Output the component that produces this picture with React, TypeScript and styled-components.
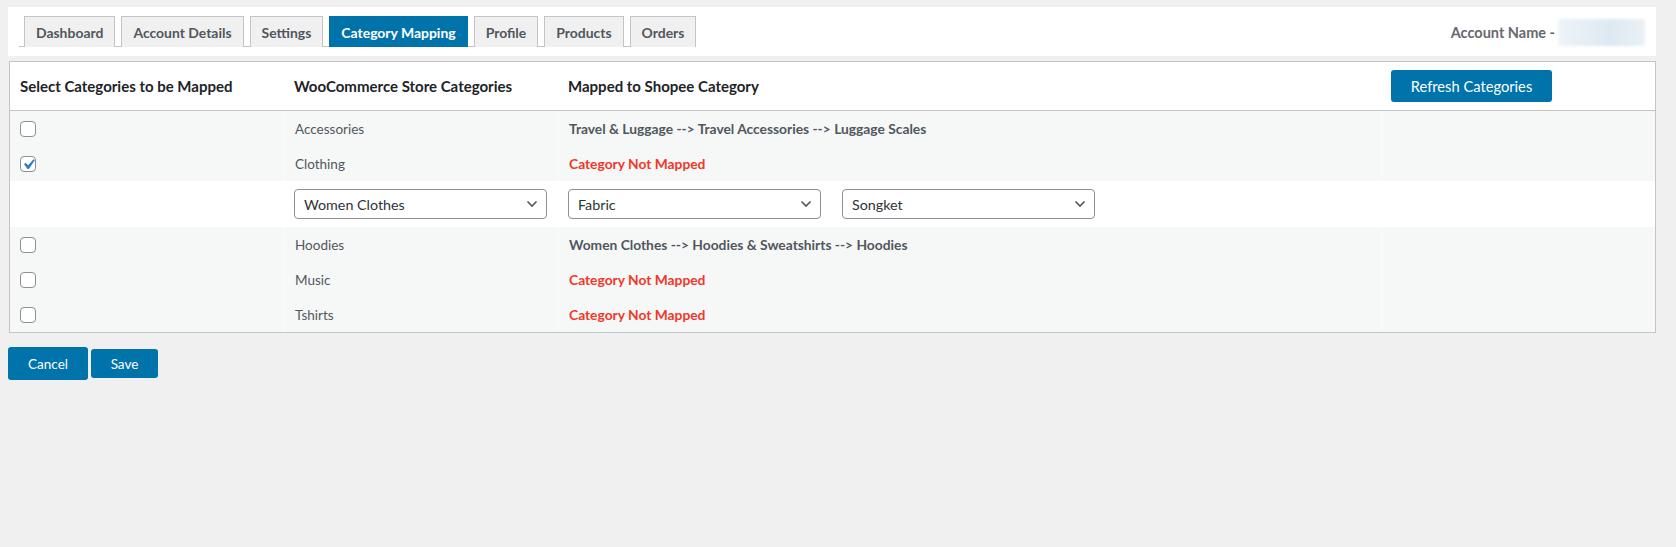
import React from "react";
import styled, { createGlobalStyle } from "styled-components";

const Global = createGlobalStyle`
  html, body { margin: 0; padding: 0; background: #f0f0f1; }
  body { font-family: "Lato", "Noto Sans", sans-serif; color: #3c434a; }
  * { box-sizing: border-box; }
`;

const Page = styled.div`
  min-height: 527px;
  padding: 7px 20px 0 8px;
  border-left: 1px solid #f5f5f5;
  margin-left: -1px;
`;

const TopBar = styled.div`
  background: #fff;
  height: 49px;
  display: flex;
  align-items: flex-start;
  justify-content: space-between;
  padding: 9px 11px 0 11px;
`;

const TabWrap = styled.nav`
  display: flex;
  border-bottom: 1px solid #c3c4c7;
  height: 31px;
`;

const Tab = styled.a<{ $active?: boolean }>`
  display: flex;
  align-items: center;
  height: 31px;
  margin-left: 6px;
  padding: 0 11px;
  font-size: 13.95px;
  font-weight: 700;
  text-decoration: none;
  border: 1px solid ${(p) => (p.$active ? "#0073aa" : "#c3c4c7")};
  border-bottom: none;
  background: ${(p) => (p.$active ? "#0073aa" : "#f0f0f1")};
  color: ${(p) => (p.$active ? "#fff" : "#50575e")};
  &:first-child { margin-left: 5px; }
`;

const AccountBox = styled.div`
  display: flex;
  align-items: center;
  gap: 3px;
  margin-top: 3px;
  font-size: 14.5px;
  font-weight: 700;
  color: #646970;
`;

const Blurred = styled.span`
  display: block;
  width: 87px;
  height: 27px;
  background: linear-gradient(90deg, #eef4f8, #dde9f1 60%, #eaf1f6);
  filter: blur(1.5px);
`;

const Table = styled.div`
  margin: 5px 0 0 1px;
  background: #fff;
  border: 1px solid #c3c4c7;
`;

const COLS = "274px 274px 823px 1fr";

const HeadRow = styled.div`
  display: grid;
  grid-template-columns: ${COLS};
  height: 49px;
  align-items: center;
  border-bottom: 1px solid #c3c4c7;
`;

const HeadCell = styled.div`
  padding: 0 10px;
  font-size: 15px;
  font-weight: 700;
  color: #1d2327;
`;

const Row = styled.div<{ $white?: boolean }>`
  display: grid;
  grid-template-columns: ${COLS};
  height: ${(p) => (p.$white ? "46px" : "35px")};
  align-items: center;
  background: ${(p) => (p.$white ? "#fff" : "#f6f7f7")};
`;

const Cell = styled.div<{ $sep?: boolean }>`
  padding: 0 10px;
  height: 100%;
  display: flex;
  align-items: center;
  gap: 21px;
  font-size: 13.5px;
  color: #50575e;
  border-left: ${(p) => (p.$sep ? "1px solid #fafbfb" : "none")};
`;

const Mapped = styled.span<{ $missing?: boolean }>`
  font-size: 13.8px;
  font-weight: 700;
  color: ${(p) => (p.$missing ? "#f0382a" : "#50575e")};
`;

const Box = styled.span`
  position: relative;
  width: 16px;
  height: 16px;
  border: 1px solid #8c8f94;
  border-radius: 4px;
  background: #fff;
`;

const Tick = styled.svg`
  position: absolute;
  left: -3px;
  top: -3px;
`;

const SelectBox = styled.div`
  width: 253px;
  height: 30px;
  border: 1px solid #8c8f94;
  border-radius: 4px;
  background: #fff;
  display: flex;
  align-items: center;
  justify-content: space-between;
  padding: 0 8px 0 9px;
  font-size: 14.3px;
  color: #2c3338;
`;

const BlueButton = styled.button<{ $w: number; $h: number; $fs?: number }>`
  width: ${(p) => p.$w}px;
  height: ${(p) => p.$h}px;
  background: #0073aa;
  color: #fff;
  border: none;
  border-radius: 3px;
  font-family: inherit;
  font-size: ${(p) => p.$fs ?? 13.5}px;
  cursor: pointer;
  padding: 0;
`;

const Actions = styled.div`
  display: flex;
  align-items: center;
  gap: 3px;
  margin-top: 14px;
`;

const Checkbox = ({ checked }: { checked?: boolean }) => (
  <Box>
    {checked && (
      <Tick width="21" height="21" viewBox="0 0 20 20">
        <path d="M14.83 4.89l1.34.94-5.81 8.38H9.02L5.78 9.67l1.34-1.25 2.57 2.4z" fill="#2f7bc4" />
      </Tick>
    )}
  </Box>
);

const Select = ({ value }: { value: string }) => (
  <SelectBox>
    <span>{value}</span>
    <svg width="12" height="8" viewBox="0 0 12 8">
      <polyline points="1.5,1.5 6,6 10.5,1.5" fill="none" stroke="#50575e" strokeWidth="1.6" />
    </svg>
  </SelectBox>
);

const tabs = ["Dashboard", "Account Details", "Settings", "Category Mapping", "Profile", "Products", "Orders"];

const rows: { name: string; mapped?: string; checked?: boolean }[] = [
  { name: "Accessories", mapped: "Travel & Luggage --> Travel Accessories --> Luggage Scales" },
  { name: "Clothing", checked: true },
  { name: "Hoodies", mapped: "Women Clothes --> Hoodies & Sweatshirts --> Hoodies" },
  { name: "Music" },
  { name: "Tshirts" },
];

export default function App() {
  return (
    <>
      <Global />
      <Page>
        <TopBar>
          <TabWrap>
            {tabs.map((t) => (
              <Tab key={t} $active={t === "Category Mapping"}>
                {t}
              </Tab>
            ))}
          </TabWrap>
          <AccountBox>
            <span>Account Name -</span>
            <Blurred />
          </AccountBox>
        </TopBar>

        <Table>
          <HeadRow>
            <HeadCell>Select Categories to be Mapped</HeadCell>
            <HeadCell>WooCommerce Store Categories</HeadCell>
            <HeadCell>Mapped to Shopee Category</HeadCell>
            <HeadCell>
              <BlueButton $w={161} $h={32} $fs={14.7}>
                Refresh Categories
              </BlueButton>
            </HeadCell>
          </HeadRow>
          {rows.map((r) => (
            <React.Fragment key={r.name}>
              <Row>
                <Cell>
                  <Checkbox checked={r.checked} />
                </Cell>
                <Cell $sep>{r.name}</Cell>
                <Cell $sep>
                  {r.mapped ? <Mapped>{r.mapped}</Mapped> : <Mapped $missing>Category Not Mapped</Mapped>}
                </Cell>
                <Cell $sep />
              </Row>
              {r.checked && (
                <Row $white>
                  <Cell />
                  <Cell>
                    <Select value="Women Clothes" />
                  </Cell>
                  <Cell>
                    <Select value="Fabric" />
                    <Select value="Songket" />
                  </Cell>
                  <Cell />
                </Row>
              )}
            </React.Fragment>
          ))}
        </Table>

        <Actions>
          <BlueButton $w={80} $h={33}>Cancel</BlueButton>
          <BlueButton $w={67} $h={29}>Save</BlueButton>
        </Actions>
      </Page>
    </>
  );
}
